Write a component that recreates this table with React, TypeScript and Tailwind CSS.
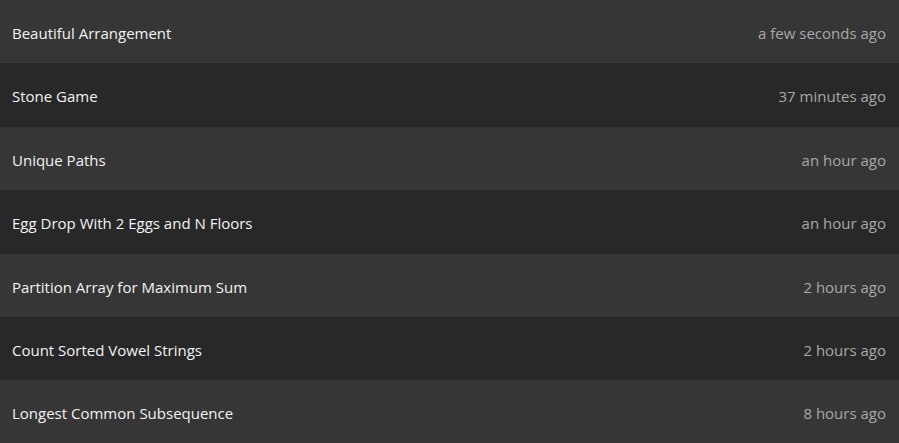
import React from "react";

const items = [
	{ title: "Beautiful Arrangement", time: "a few seconds ago" },
	{ title: "Stone Game", time: "37 minutes ago" },
	{ title: "Unique Paths", time: "an hour ago" },
	{ title: "Egg Drop With 2 Eggs and N Floors", time: "an hour ago" },
	{ title: "Partition Array for Maximum Sum", time: "2 hours ago" },
	{ title: "Count Sorted Vowel Strings", time: "2 hours ago" },
	{ title: "Longest Common Subsequence", time: "8 hours ago" },
];

export default function App() {
	return (
		<div
			className="w-[899px] h-[443px] bg-[#282828] overflow-hidden"
			style={{ fontFamily: '"Open Sans", "Noto Sans", sans-serif' }}
		>
			<ul className="flex flex-col">
				{items.map((item, i) => (
					<li
						key={item.title}
						className={
							"h-[63.4px] flex items-center justify-between pl-3 pr-[13px] pt-[3px] " +
							(i % 2 === 0 ? "bg-[#363636]" : "bg-[#282828]")
						}
					>
						<span className="text-[15px] text-[#f2f2f2]">
							{item.title}
						</span>
						<span className="text-[15px] text-[#a8a8a8]">
							{item.time}
						</span>
					</li>
				))}
			</ul>
		</div>
	);
}
